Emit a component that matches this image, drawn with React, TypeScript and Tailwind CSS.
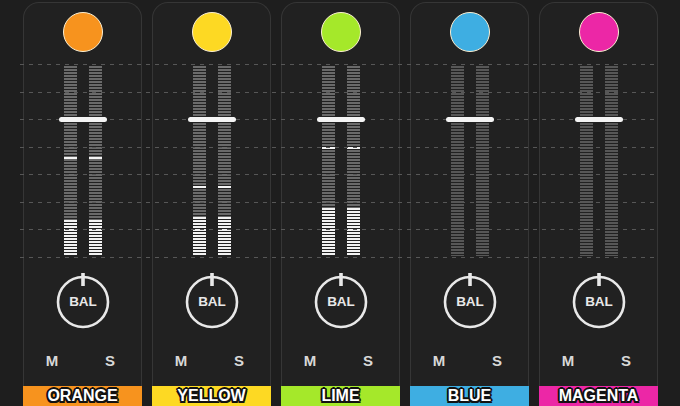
type Channel = {
  name: string;
  swatch: string;
  label: string;
  peak: number | null;
  lit: number;
  dim: string;
};

const channels: Channel[] = [
  { name: 'ORANGE', swatch: 'bg-[#f7931e]', label: 'bg-[#f7931e]', peak: 91, lit: 36, dim: 'bg-[repeating-linear-gradient(to_bottom,#6a6a6a_0px,#6a6a6a_2px,#212121_2px,#212121_3px)]' },
  { name: 'YELLOW', swatch: 'bg-[#fdd923]', label: 'bg-[#fdd923]', peak: 120, lit: 39, dim: 'bg-[repeating-linear-gradient(to_bottom,#6a6a6a_0px,#6a6a6a_2px,#212121_2px,#212121_3px)]' },
  { name: 'LIME', swatch: 'bg-[#a5e82a]', label: 'bg-[#a5e82a]', peak: 81, lit: 48, dim: 'bg-[repeating-linear-gradient(to_bottom,#6a6a6a_0px,#6a6a6a_2px,#212121_2px,#212121_3px)]' },
  { name: 'BLUE', swatch: 'bg-[#3eaee2]', label: 'bg-[#3eaee2]', peak: null, lit: 0, dim: 'bg-[repeating-linear-gradient(to_bottom,#575757_0px,#575757_2px,#212121_2px,#212121_3px)]' },
  { name: 'MAGENTA', swatch: 'bg-[#ec27a6]', label: 'bg-[#ec27a6]', peak: null, lit: 0, dim: 'bg-[repeating-linear-gradient(to_bottom,#575757_0px,#575757_2px,#212121_2px,#212121_3px)]' },
];

const gridLines = [0, 1, 2, 3, 4, 5, 6, 7];

export default function App() {
  return (
    <div className="relative h-[406px] w-[680px] overflow-hidden bg-[#1e1e1e] font-['Liberation_Sans',Arial,sans-serif]">
      {/* Channel strips */}
      <div className="flex gap-[10px] pl-[23px] pt-[2px]">
        {channels.map((ch) => (
          <Strip key={ch.name} ch={ch} />
        ))}
      </div>

      {/* Dashed level grid over the meters */}
      <div className="pointer-events-none absolute left-[20px] top-[64px] z-10 flex w-[638px] flex-col gap-[26.57px]">
        {gridLines.map((i) => (
          <div
            key={i}
            className="h-px bg-[repeating-linear-gradient(90deg,#575757_0px,#575757_4px,transparent_4px,transparent_9px)]"
          />
        ))}
      </div>
    </div>
  );
}

function Strip({ ch }: { ch: Channel }) {
  return (
    <div className="flex h-[460px] w-[119px] shrink-0 flex-col items-center rounded-t-[16px] border border-b-0 border-[#363636] bg-[#212121]">
      {/* Colour swatch */}
      <div className={`mt-[9px] h-[40px] w-[40px] shrink-0 rounded-full border-[1.5px] border-[#fbefd2] ${ch.swatch}`} />

      {/* Meters + fader */}
      <div className="relative mt-[14px] flex h-[190px] w-[38px] shrink-0 justify-between">
        <Meter ch={ch} />
        <Meter ch={ch} />
        <div className="absolute left-1/2 top-[50.5px] z-20 h-[5px] w-[48px] -translate-x-1/2 rounded-full bg-[#f4f4f4]" />
      </div>

      {/* Balance knob */}
      <svg className="mt-[16px] shrink-0" width="56" height="58" viewBox="0 0 56 58">
        <circle cx="28" cy="30" r="25" fill="none" stroke="#e8e8e8" strokeWidth="2.6" />
        <rect x="26.2" y="1" width="3.6" height="13" fill="#e8e8e8" />
        <text
          x="28"
          y="33.5"
          textAnchor="middle"
          fill="#e8e8e8"
          fontSize="13.5"
          fontWeight="700"
          fontFamily="'Liberation Sans', Arial, sans-serif"
        >
          BAL
        </text>
      </svg>

      {/* Mute / Solo */}
      <div className="mt-[22px] flex shrink-0 gap-[38px] self-start pl-[18px] text-[15px] font-bold leading-[17px] text-[#d8d8d8]">
        <span className="w-[20px] text-center">M</span>
        <span className="w-[20px] text-center">S</span>
      </div>

      {/* Channel name */}
      <div
        className={`mt-[17px] h-[40px] w-[119px] shrink-0 pt-px text-center text-[16px] font-bold leading-[18px] text-white [text-shadow:-1.5px_-1.5px_0_#111,1.5px_-1.5px_0_#111,-1.5px_1.5px_0_#111,1.5px_1.5px_0_#111,0_1.8px_0_#111,0_-1.8px_0_#111,1.8px_0_0_#111,-1.8px_0_0_#111] ${ch.label}`}
      >
        {ch.name}
      </div>
    </div>
  );
}

function Meter({ ch }: { ch: Channel }) {
  return (
    <div className={`relative h-[190px] w-[13px] ${ch.dim}`}>
      {ch.peak !== null && (
        <div className="absolute left-0 right-0 h-[2px] bg-[#f4f4f4]" style={{ top: ch.peak }} />
      )}
      {ch.lit > 0 && (
        <div
          className="absolute bottom-0 left-0 right-0 bg-[repeating-linear-gradient(to_top,#212121_0px,#212121_1px,#f2f2f2_1px,#f2f2f2_3px)]"
          style={{ height: ch.lit }}
        />
      )}
    </div>
  );
}
